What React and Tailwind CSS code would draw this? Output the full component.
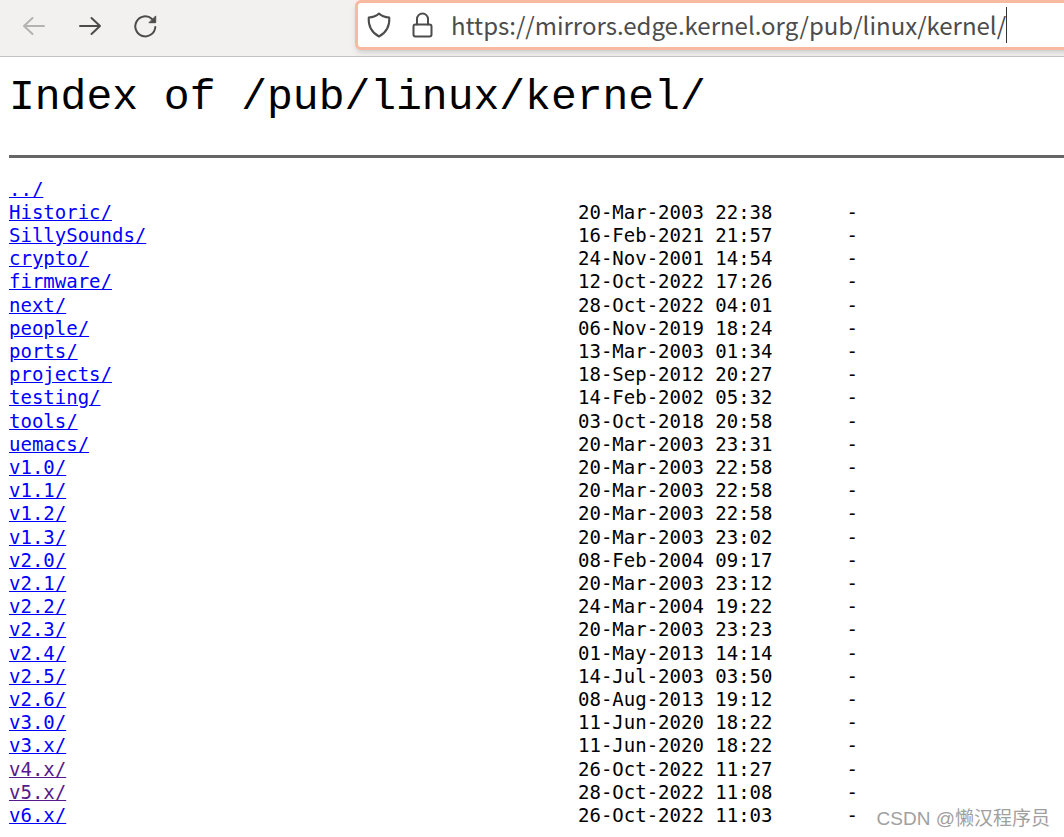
import React from 'react';

const entries = [
    { name: '../' },
    { name: 'Historic/', date: '20-Mar-2003 22:38' },
    { name: 'SillySounds/', date: '16-Feb-2021 21:57' },
    { name: 'crypto/', date: '24-Nov-2001 14:54' },
    { name: 'firmware/', date: '12-Oct-2022 17:26' },
    { name: 'next/', date: '28-Oct-2022 04:01' },
    { name: 'people/', date: '06-Nov-2019 18:24' },
    { name: 'ports/', date: '13-Mar-2003 01:34' },
    { name: 'projects/', date: '18-Sep-2012 20:27' },
    { name: 'testing/', date: '14-Feb-2002 05:32' },
    { name: 'tools/', date: '03-Oct-2018 20:58' },
    { name: 'uemacs/', date: '20-Mar-2003 23:31' },
    { name: 'v1.0/', date: '20-Mar-2003 22:58' },
    { name: 'v1.1/', date: '20-Mar-2003 22:58' },
    { name: 'v1.2/', date: '20-Mar-2003 22:58' },
    { name: 'v1.3/', date: '20-Mar-2003 23:02' },
    { name: 'v2.0/', date: '08-Feb-2004 09:17' },
    { name: 'v2.1/', date: '20-Mar-2003 23:12' },
    { name: 'v2.2/', date: '24-Mar-2004 19:22' },
    { name: 'v2.3/', date: '20-Mar-2003 23:23' },
    { name: 'v2.4/', date: '01-May-2013 14:14' },
    { name: 'v2.5/', date: '14-Jul-2003 03:50' },
    { name: 'v2.6/', date: '08-Aug-2013 19:12' },
    { name: 'v3.0/', date: '11-Jun-2020 18:22' },
    { name: 'v3.x/', date: '11-Jun-2020 18:22' },
    { name: 'v4.x/', date: '26-Oct-2022 11:27', visited: true },
    { name: 'v5.x/', date: '28-Oct-2022 11:08', visited: true },
    { name: 'v6.x/', date: '26-Oct-2022 11:03' },
];

const Icon = ({ children, className = '' }) => (
    <svg
        viewBox="0 0 28 28"
        fill="none"
        stroke="currentColor"
        strokeWidth="2"
        strokeLinecap="round"
        strokeLinejoin="round"
        className={`size-7 shrink-0 ${className}`}
        aria-hidden="true"
    >
        {children}
    </svg>
);

const Toolbar = () => (
    <header className="flex items-start overflow-hidden border-b border-[#c4c2c0] bg-[#f2f1f0] pb-[6px] text-[#4c4c4c]">
        <nav className="flex shrink-0 gap-7 pt-3 pl-5">
            <button type="button" aria-label="Back" disabled className="text-[#b4b3b2]">
                <Icon>
                    <path d="M24 14H4M12.500 6L4 14l8.500 8" />
                </Icon>
            </button>
            <button type="button" aria-label="Forward">
                <Icon>
                    <path d="M4 14h20M15.500 6l8.500 8-8.500 8" />
                </Icon>
            </button>
            <button type="button" aria-label="Reload">
                <Icon>
                    <path d="M23.300 15A10 10 0 1 1 20 6.900" />
                    <path d="M23.700 4.300v6.400h-6.400z" fill="currentColor" strokeWidth="1" />
                </Icon>
            </button>
        </nav>
        <div className="-mr-2 ml-[195px] flex h-[50px] flex-1 items-center rounded-md border-[3px] border-[#f7b99f] bg-white pl-[7px] shadow-md">
            <Icon>
                <path d="M14 2.500c2.500 2.600 6 3.800 10.300 4 .4 7-2 14.500-10.300 19C5.700 21 3.300 13.500 3.700 6.500 8 6.300 11.500 5.100 14 2.500z" />
            </Icon>
            <Icon className="ml-4">
                <rect x="4.500" y="13.500" width="18" height="12" rx="2" />
                <path d="M8 13.500V8a5.500 5.500 0 0 1 11 0v5.500" />
            </Icon>
            <input
                type="text"
                aria-label="Address"
                defaultValue="https://mirrors.edge.kernel.org/pub/linux/kernel/"
                className="ml-[14px] field-sizing-content font-['Noto_Sans_CJK_SC',sans-serif] text-[24px] leading-9 outline-none"
            />
            <span className="h-9 w-px shrink-0 bg-[#333]" />
        </div>
    </header>
);

const App = () => {
    return (
        <div className="flex min-h-screen flex-col bg-white text-black">
            <Toolbar />
            <main className="relative flex flex-1 flex-col overflow-hidden pb-[10px] pl-[9px]">
                <h1 className="pt-4 font-['Liberation_Mono',monospace] text-[43px] leading-[50px]">
                    Index of /pub/linux/kernel/
                </h1>
                <hr className="mt-8 mb-[19px] border-t-[3px] border-[#666]" />
                {/* rows share whatever height is left below the rule */}
                <div className="flex flex-1">
                    <table className="font-['DejaVu_Sans_Mono',monospace] text-[19px] leading-[22px] whitespace-pre">
                        <tbody>
                            {entries.map((entry) => (
                                <tr key={entry.name}>
                                    <td className="w-[569px] p-0">
                                        <a
                                            href="#"
                                            className={`underline ${entry.visited ? 'text-[#551a8b]' : 'text-[#0000ff]'}`}
                                        >
                                            {entry.name}
                                        </a>
                                    </td>
                                    <td className="p-0 pr-[74px]">{entry.date}</td>
                                    <td className="p-0">{entry.date ? '-' : ''}</td>
                                </tr>
                            ))}
                        </tbody>
                    </table>
                </div>
                <p className="absolute right-[14px] bottom-1 font-['Liberation_Sans','Noto_Sans_CJK_SC',sans-serif] text-[19px] leading-7 text-[#a0a0a0]">
                    CSDN @懒汉程序员
                </p>
            </main>
        </div>
    );
};

export default App;
